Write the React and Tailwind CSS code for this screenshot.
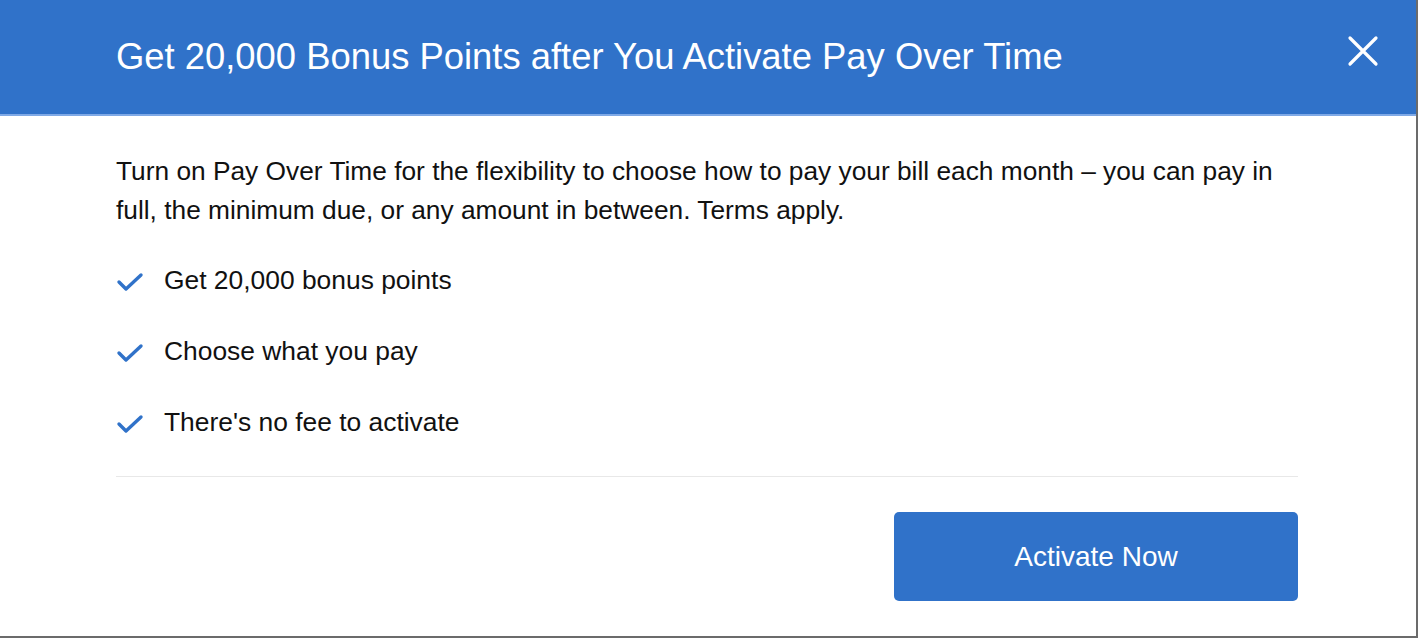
export default function App() {
  const items = ['Get 20,000 bonus points', 'Choose what you pay', "There's no fee to activate"]
  return (
    <div className="w-[1418px] h-[638px] bg-[#6b6b6b] overflow-hidden" style={{ fontFamily: '"Liberation Sans", Arial, sans-serif' }}>
      <div className="w-[1416px] h-[636px] bg-white flex flex-col">
        <div className="h-[116px] bg-[#3072c9] border-b-2 border-[#7fa9e6] flex items-center justify-between pl-[116px] pr-[33px] shrink-0">
          <h1 className="text-white text-[36.4px] font-normal pt-[1px]">Get 20,000 Bonus Points after You Activate Pay Over Time</h1>
          <button className="w-[40px] h-[40px] flex items-center justify-center mb-[12px]">
            <svg width="32" height="32" viewBox="0 0 32 32" fill="none" stroke="white" strokeWidth="3.2" strokeLinecap="round">
              <path d="M3 3 L29 29 M29 3 L3 29" />
            </svg>
          </button>
        </div>
        <div className="px-[116px] pt-[36px] pr-[118px]">
          <p className="text-[26.3px] leading-[39px] text-[#111111]">
            Turn on Pay Over Time for the flexibility to choose how to pay your bill each month – you can pay in full, the minimum due, or any amount in between. Terms apply.
          </p>
          <ul className="mt-[37px] flex flex-col gap-[43px]">
            {items.map(t => (
              <li key={t} className="flex items-center h-[28px]">
                <svg width="28" height="20" viewBox="0 0 28 20" fill="none" stroke="#3072c9" strokeWidth="3.4" strokeLinecap="round" strokeLinejoin="round" className="mr-[20px] mt-[2px]">
                  <path d="M3 10 L10 17 L25 3" />
                </svg>
                <span className="text-[26.4px] text-[#111111]">{t}</span>
              </li>
            ))}
          </ul>
          <div className="mt-[39px] border-t border-[#e8e8e8]" />
          <div className="flex justify-end mt-[35px]">
            <button className="w-[404px] h-[89px] rounded-[5px] bg-[#3072c9] text-white text-[28px]">Activate Now</button>
          </div>
        </div>
      </div>
    </div>
  )
}
